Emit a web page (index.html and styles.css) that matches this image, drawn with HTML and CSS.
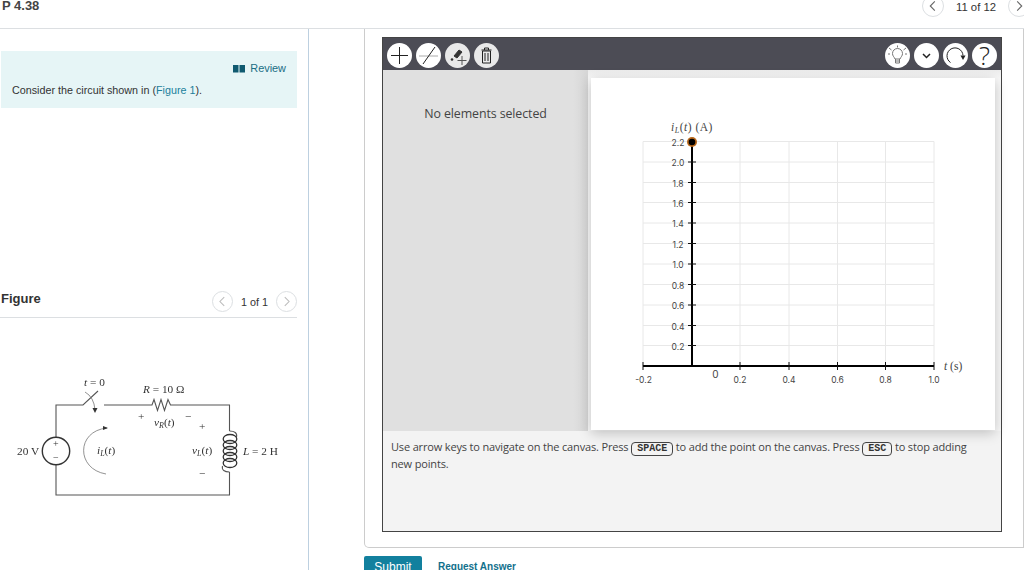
FILE: index.html
```html
<!DOCTYPE html>
<html lang="en">
<head>
<meta charset="utf-8">
<title>P 4.38</title>
<link rel="stylesheet" href="styles.css">
</head>
<body>
<div class="page">
  <header class="top">
    <h1 class="title">P 4.38</h1>
    <div class="pager main-pager">
      <span class="pg-btn"><svg viewBox="0 0 22 22"><path d="M13 6l-5 5 5 5"/></svg></span>
      <span class="pg-text">11 of 12</span>
      <span class="pg-btn"><svg viewBox="0 0 22 22"><path d="M9 6l5 5-5 5"/></svg></span>
    </div>
  </header>
  <div class="columns">
    <aside class="left">
      <section class="intro">
        <div class="review"><svg class="book" viewBox="0 0 12 9"><path d="M0 1h5.500v7.500H0zM6.500 1H12v7.500H6.500z"/></svg><span>Review</span></div>
        <p class="intro-text">Consider the circuit shown in (<span class="link">Figure 1</span>).</p>
      </section>
      <div class="fig-head">
        <h2 class="fig-title">Figure</h2>
        <div class="pager fig-pager">
          <span class="pg-btn small"><svg viewBox="0 0 22 22"><path d="M13 6l-5 5 5 5"/></svg></span>
          <span class="pg-text">1 of 1</span>
          <span class="pg-btn small"><svg viewBox="0 0 22 22"><path d="M9 6l5 5-5 5"/></svg></span>
        </div>
      </div>
      <svg class="circuit" viewBox="0 360 297 150">
        <g class="wire">
          <path d="M56 438V406H83L98 392M104 406H152l2-5.500 3.500 11 3.500-11 3.500 11 3.500-11 2.500 5.500H229.500V432"/>
          <path d="M229.500 473V496H56V466"/>
          <circle class="src" cx="56" cy="452" r="13.700"/>
          <path class="thin" d="M85 393Q94 398 95 411"/>
          <path class="thin" d="M106 475C76 470 76 432 107 429"/>
          <path d="M229.500 432c5 0 8 2 7 6M229.500 473c-5 0-8-2-7-6"/>
          <ellipse class="coil" cx="230" cy="440" rx="6.800" ry="4.500"/>
          <ellipse class="coil" cx="230" cy="446" rx="6.800" ry="4.500"/>
          <ellipse class="coil" cx="230" cy="452" rx="6.800" ry="4.500"/>
          <ellipse class="coil" cx="230" cy="458" rx="6.800" ry="4.500"/>
          <ellipse class="coil" cx="230" cy="464" rx="6.800" ry="4.500"/>
        </g>
        <path class="head" d="M92.500 409l5 0-2.500 5zM103 427l5 2-5 2z"/>
        <g class="ctext">
          <text x="84" y="387" class="it">t<tspan class="up"> = 0</tspan></text>
          <text x="143" y="394" class="it">R<tspan class="up"> = 10 Ω</tspan></text>
          <text x="138" y="421" class="up">+</text>
          <text x="154" y="427" class="it">v<tspan class="sub" dy="2">R</tspan><tspan class="up" dy="-2">(</tspan>t<tspan class="up">)</tspan></text>
          <text x="185" y="421" class="up">−</text>
          <text x="199" y="431" class="up">+</text>
          <text x="199" y="478" class="up">−</text>
          <text x="17" y="456" class="up">20 V</text>
          <text x="53" y="448" class="up small-sign">+</text>
          <text x="53" y="462" class="up small-sign">−</text>
          <text x="97" y="455" class="it">i<tspan class="sub" dy="2">L</tspan><tspan class="up" dy="-2">(</tspan>t<tspan class="up">)</tspan></text>
          <text x="192" y="455" class="it">v<tspan class="sub" dy="2">L</tspan><tspan class="up" dy="-2">(</tspan>t<tspan class="up">)</tspan></text>
          <text x="243" y="456" class="it">L<tspan class="up"> = 2 H</tspan></text>
        </g>
      </svg>
    </aside>
    <main class="right">
      <div class="card">
        <div class="tool">
          <div class="toolbar">
            <div class="tools">
              <span class="tbtn"><svg viewBox="0 0 25 25"><path d="M12.500 4v17M4 12.500h17"/></svg></span>
              <span class="tbtn"><svg viewBox="0 0 25 25"><path class="faint" d="M3 13h19"/><path d="M19 4L7 21"/></svg></span>
              <span class="tbtn muted"><svg viewBox="0 0 25 25"><path class="fat" d="M9 13l5-6 3 2-5 6z"/><circle class="dot" cx="7" cy="16.500" r="1.300"/><path class="gray2" d="M17 13v9M12.500 17.500h9"/></svg></span>
              <span class="tbtn muted"><svg viewBox="0 0 25 25"><path d="M8.500 8h8v12h-8zM7.500 7h10M10.500 7V5h4v2M11 10v8M14 10v8"/></svg></span>
            </div>
            <div class="tools">
              <span class="tbtn"><svg viewBox="0 0 25 25"><path class="gray" d="M10 16c-1-2.500-2.500-3-2.500-5.500a5 5 0 0 1 10 0c0 2.500-1.500 3-2.500 5.500zM10.500 16v4h4v-4M10.500 18h4M4 5l2.500 2M21 5l-2.500 2M12.500 2.500v2M3 11h2M20 11h2"/></svg></span>
              <span class="tbtn"><svg viewBox="0 0 25 25"><path class="bold" d="M9 11l3.500 3.500L16 11"/></svg></span>
              <span class="tbtn"><svg viewBox="0 0 25 25"><path d="M7.500 19.500A8 8 0 1 1 20 12.500"/><path class="solid" d="M17.500 12.500h5L20 17z"/></svg></span>
              <span class="tbtn qmark">?</span>
            </div>
          </div>
          <div class="work">
            <div class="side">No elements selected</div>
            <div class="stage">
              <svg class="chart" viewBox="591 78 404 352">
                <path class="grid" d="M643 141.500V366M740 141.500V366M789 141.500V366M837.500 141.500V366M885.500 141.500V366M934 141.500V366M643 141.500H934M643 162H934M643 182.500H934M643 202.500H934M643 223H934M643 243.500H934M643 264H934M643 284.500H934M643 305H934M643 325.500H934M643 345.500H934"/>
                <path class="axis" d="M692 142V366M643 366H934"/>
                <path class="tick" d="M688 162h8M688 182.500h8M688 202.500h8M688 223h8M688 243.500h8M688 264h8M688 284.500h8M688 305h8M688 325.500h8M688 345.500h8M643 362v8M740 362v8M789 362v8M837.500 362v8M885.500 362v8M934 362v8"/>
                <g class="ylab">
                  <text x="678" y="146">2.2</text><text x="678" y="166">2.0</text><text x="678" y="187">1.8</text><text x="678" y="207">1.6</text><text x="678" y="227">1.4</text><text x="678" y="248">1.2</text><text x="678" y="268">1.0</text><text x="678" y="289">0.8</text><text x="678" y="309">0.6</text><text x="678" y="330">0.4</text><text x="678" y="350">0.2</text>
                </g>
                <g class="ylab">
                  <text x="643.500" y="383">-0.2</text><text x="740" y="383">0.2</text><text x="789" y="383">0.4</text><text x="837.500" y="383">0.6</text><text x="885.500" y="383">0.8</text><text x="934" y="383">1.0</text>
                </g>
                <text class="zero" x="715.500" y="378">0</text>
                <text class="alabel wide" x="671" y="130.500"><tspan class="ai">i</tspan><tspan class="asub" dy="2">L</tspan><tspan dy="-2">(</tspan><tspan class="ai">t</tspan>) (A)</text>
                <text class="alabel" x="944" y="369.500"><tspan class="ai">t</tspan> (s)</text>
                <circle class="pt-o" cx="692" cy="142" r="5"/>
                <circle class="pt-i" cx="692" cy="142" r="3.300"/>
              </svg>
            </div>
          </div>
          <div class="help">Use arrow keys to navigate on the canvas. Press <kbd class="key">SPACE</kbd> to add the point on the canvas. Press <kbd class="key">ESC</kbd> to stop adding new points.</div>
        </div>
      </div>
      <div class="actions">
        <button class="submit" type="button">Submit</button>
        <span class="request">Request Answer</span>
      </div>
    </main>
  </div>
</div>
</body>
</html>
```
FILE: styles.css
```css
* { box-sizing: border-box; }
html, body { margin: 0; padding: 0; height: 570px; overflow: hidden; background: #fff; }
body { font-family: "Liberation Sans", Arial, sans-serif; color: #333; }
.page { width: 1024px; height: 570px; overflow: hidden; display: flex; flex-direction: column; }
.top { height: 29px; flex: none; display: flex; justify-content: space-between; align-items: flex-start; border-bottom: 1px solid #dcdfe2; padding-left: 2px; }
.title { margin: 0; font-size: 13px; line-height: 11px; font-weight: bold; color: #444; }
.pager { display: flex; align-items: center; }
.main-pager { margin-top: -5px; margin-right: -6px; gap: 12px; font-size: 11.300px; }
.main-pager .pg-text { position: relative; top: 1px; }
.pg-btn { width: 22px; height: 22px; border: 1px solid #dcdfe2; border-radius: 50%; display: block; flex: none; }
.pg-btn svg { display: block; width: 100%; height: 100%; fill: none; stroke: #666; stroke-width: 1.200; }
.pg-text { color: #333; }
.columns { flex: 1; display: flex; min-height: 0; }
.left { width: 309px; flex: none; border-right: 1px solid #bdd0e0; padding-top: 22px; }
.intro { margin-left: 1px; width: 296px; height: 57px; background: #e6f5f6; padding: 10px 11px 0 11px; }
.review { display: flex; justify-content: flex-end; align-items: center; gap: 5px; font-size: 10.900px; color: #1a6e85; line-height: 14px; }
.book { width: 12px; height: 9px; fill: #0f5a70; }
.intro-text { margin: 8px 0 0; font-size: 10.750px; line-height: 14px; color: #333; }
.link { color: #1a7f9c; }
.fig-head { width: 297px; height: 29px; margin-top: 181px; border-bottom: 1px solid #dcdfe2; display: flex; justify-content: space-between; align-items: center; padding-left: 1px; }
.fig-title { margin: 0 0 8px; font-size: 13px; font-weight: bold; line-height: 16px; color: #333; }
.fig-pager { gap: 8px; font-size: 10.800px; margin-bottom: 3px; }
.pg-btn.small { width: 21px; height: 21px; }
.pg-btn.small svg { stroke: #bbb; }
.circuit { display: block; width: 297px; height: 150px; margin-top: 41px; filter: blur(0.35px); }
.wire { fill: none; stroke: #555; stroke-width: 1.100; }
.wire .thin { stroke: #777; stroke-width: 0.800; }
.wire .src { stroke: #333; stroke-width: 1.400; }
.wire .coil { stroke: #333; stroke-width: 1.300; }
.head { fill: #333; }
.ctext text { font-family: "Liberation Serif", serif; font-size: 11.300px; fill: #333; font-style: italic; }
.ctext .up { font-style: normal; }
.ctext .sub { font-size: 8px; }
.ctext .small-sign { font-size: 10px; }
.right { flex: 1; min-width: 0; margin-left: 55px; }
.card { border: 1px solid #ccc; border-top: 0; border-radius: 0 0 0 5px; padding: 8px 21px 15px 17px; height: 519px; }
.tool { height: 495px; border: 1px solid #444; display: flex; flex-direction: column; background: #f3f3f3; font-family: "Open Sans", sans-serif; color: #444; }
.toolbar { height: 32px; flex: none; background: #4c4c55; display: flex; justify-content: space-between; align-items: center; padding: 2px 4px 0 4px; }
.tools { display: flex; gap: 4px; }
.tbtn { width: 25px; height: 25px; border-radius: 50%; background: #fff; display: block; }
.tbtn.muted { background: #e9e9e9; }
.tbtn svg { display: block; width: 25px; height: 25px; fill: none; stroke: #222; stroke-width: 1; }
.tbtn .faint { stroke: #aaa; }
.tbtn .gray { stroke: #777; }
.tbtn .gray2 { stroke: #555; }
.tbtn .bold { stroke-width: 1.500; }
.tbtn .fat { fill: #333; stroke: #333; }
.tbtn .dot { fill: #333; stroke: none; }
.tbtn .solid { fill: #222; stroke: none; }
.qmark { font-family: "Open Sans", sans-serif; font-size: 26px; line-height: 25px; text-align: center; color: #222; font-weight: 300; }
.work { height: 361px; flex: none; display: flex; position: relative; }
.side { width: 205px; flex: none; background: linear-gradient(90deg, #e0e0e0 190px, #d6d6d6); text-align: center; padding-top: 35px; font-size: 12.400px; letter-spacing: -0.100px; line-height: 18px; color: #444; }
.stage { flex: 1; padding: 8px 6px 0 3px; background: linear-gradient(#ececec, #f8f8f8 8px); position: relative; }
.chart { display: block; width: 404px; height: 352px; background: #fff; box-shadow: 0 3px 12px rgba(0, 0, 0, 0.22); }
.grid { fill: none; stroke: #e8e8e8; stroke-width: 1; }
.axis { fill: none; stroke: #000; stroke-width: 2; }
.tick { fill: none; stroke: #111; stroke-width: 1; }
.ylab text { font-family: "Inter", sans-serif; font-size: 8.500px; fill: #444; text-anchor: middle; }
.zero { font-family: "Inter", sans-serif; font-size: 10px; fill: #444; text-anchor: middle; }
.alabel { font-family: "Liberation Serif", serif; font-size: 11.500px; fill: #444; }
.wide { letter-spacing: 0.500px; }
.ai { font-style: italic; }
.asub { font-size: 8px; font-style: italic; }
.pt-o { fill: #b8681c; }
.pt-i { fill: #000; }
.help { padding: 8px 28px 0 8px; font-size: 11px; letter-spacing: -0.160px; line-height: 16px; color: #444; }
.key { font-family: "Liberation Mono", monospace; font-size: 10px; letter-spacing: 0; font-weight: bold; color: #333; border: 1px solid #444; border-radius: 4px; padding: 0 5px; line-height: 12px; display: inline-block; }
.actions { margin-top: 8px; display: flex; align-items: flex-start; gap: 16px; }
.submit { width: 58px; height: 22px; border: 0; border-radius: 2px 2px 0 0; background: #12809e; color: #fff; font-family: "Liberation Sans", Arial, sans-serif; font-size: 12px; padding: 0; display: block; line-height: 15px; }
.request { font-size: 10px; font-weight: bold; color: #12708c; line-height: 21px; }
```
